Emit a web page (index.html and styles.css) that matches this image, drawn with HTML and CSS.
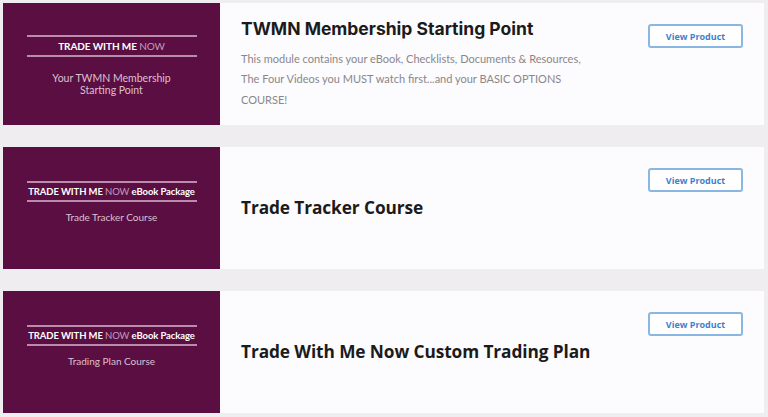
FILE: index.html
```html
<!DOCTYPE html>
<html>
<head>
<meta charset="utf-8">
<link rel="stylesheet" href="styles.css">
</head>
<body>
<div class="list">
  <div class="card">
    <div class="thumb">
      <div class="brand brand-wide"><span class="b">TRADE WITH ME</span> <span class="now">NOW</span></div>
      <div class="sub">Your TWMN Membership<br>Starting Point</div>
    </div>
    <div class="body">
      <div class="main">
        <h2 class="title title-wide">TWMN Membership Starting Point</h2>
        <p class="desc">This module contains your eBook, Checklists, Documents &amp; Resources, The Four Videos you MUST watch first...and your BASIC OPTIONS COURSE!</p>
      </div>
      <button class="btn">View Product</button>
    </div>
  </div>
  <div class="card">
    <div class="thumb thumb-pkg">
      <div class="brand"><span class="b">TRADE WITH ME</span> <span class="now">NOW</span> <span class="b">eBook Package</span></div>
      <div class="sub">Trade Tracker Course</div>
    </div>
    <div class="body">
      <div class="main">
        <h2 class="title">Trade Tracker Course</h2>
      </div>
      <button class="btn">View Product</button>
    </div>
  </div>
  <div class="card">
    <div class="thumb thumb-pkg">
      <div class="brand"><span class="b">TRADE WITH ME</span> <span class="now">NOW</span> <span class="b">eBook Package</span></div>
      <div class="sub">Trading Plan Course</div>
    </div>
    <div class="body">
      <div class="main">
        <h2 class="title">Trade With Me Now Custom Trading Plan</h2>
      </div>
      <button class="btn">View Product</button>
    </div>
  </div>
</div>
</body>
</html>
```
FILE: styles.css
```css
html, body {
  margin: 0;
  padding: 0;
  background: #efedf0;
  height: 100%;
  overflow: hidden;
}
body {
  padding: 3px 4px 0 3px;
  font-family: "Open Sans", "Liberation Sans", sans-serif;
}
.list {
  display: flex;
  flex-direction: column;
  gap: 22px;
}
.card {
  display: flex;
  height: 122px;
  background: #fcfbfd;
}
.thumb {
  width: 217px;
  flex: none;
  background: #5a0e41;
  display: flex;
  flex-direction: column;
  align-items: center;
  justify-content: center;
  font-family: "Lato", "Open Sans", sans-serif;
  padding-top: 2px;
  box-sizing: border-box;
}
.thumb-pkg {
  padding-top: 0;
  padding-bottom: 12px;
}
.brand {
  width: 170px;
  border-top: 2px solid #b98cab;
  border-bottom: 2px solid #b98cab;
  text-align: center;
  font-size: 9.5px;
  font-weight: 700;
  color: #ffffff;
  line-height: 17px;
  white-space: nowrap;
  letter-spacing: -0.1px;
}
.brand-wide {
  line-height: 18px;
  font-size: 10px;
}
.brand .now {
  color: #c79ab9;
  font-weight: 400;
}
.sub {
  margin-top: 9px;
  font-size: 10px;
  line-height: 13px;
  color: #dcc0d2;
  text-align: center;
}
.brand-wide + .sub {
  margin-top: 15px;
  font-size: 10.5px;
  line-height: 12px;
}
.body {
  flex: 1;
  display: flex;
  padding-left: 21px;
  padding-right: 21px;
}
.main {
  flex: 1;
  align-self: center;
}
.title {
  margin: 0;
  font-family: "Open Sans", sans-serif;
  font-weight: 700;
  font-size: 17.3px;
  line-height: 22px;
  color: #1b1b1b;
  letter-spacing: -0.1px;
}
.title-wide {
  font-family: "Inter", sans-serif;
  font-size: 17.5px;
  letter-spacing: 0;
}
.desc {
  margin: 9px 0 0;
  width: 345px;
  font-family: "Lato", sans-serif;
  font-size: 11px;
  line-height: 20.5px;
  color: #8a878b;
}
.btn {
  align-self: flex-start;
  margin-top: 21px;
  width: 95px;
  height: 24px;
  padding: 0;
  background: #ffffff;
  border: 2px solid #8ab6e2;
  border-radius: 3px;
  font-family: "Open Sans", sans-serif;
  font-weight: 700;
  font-size: 9px;
  color: #3f7fcc;
  cursor: pointer;
}
```
